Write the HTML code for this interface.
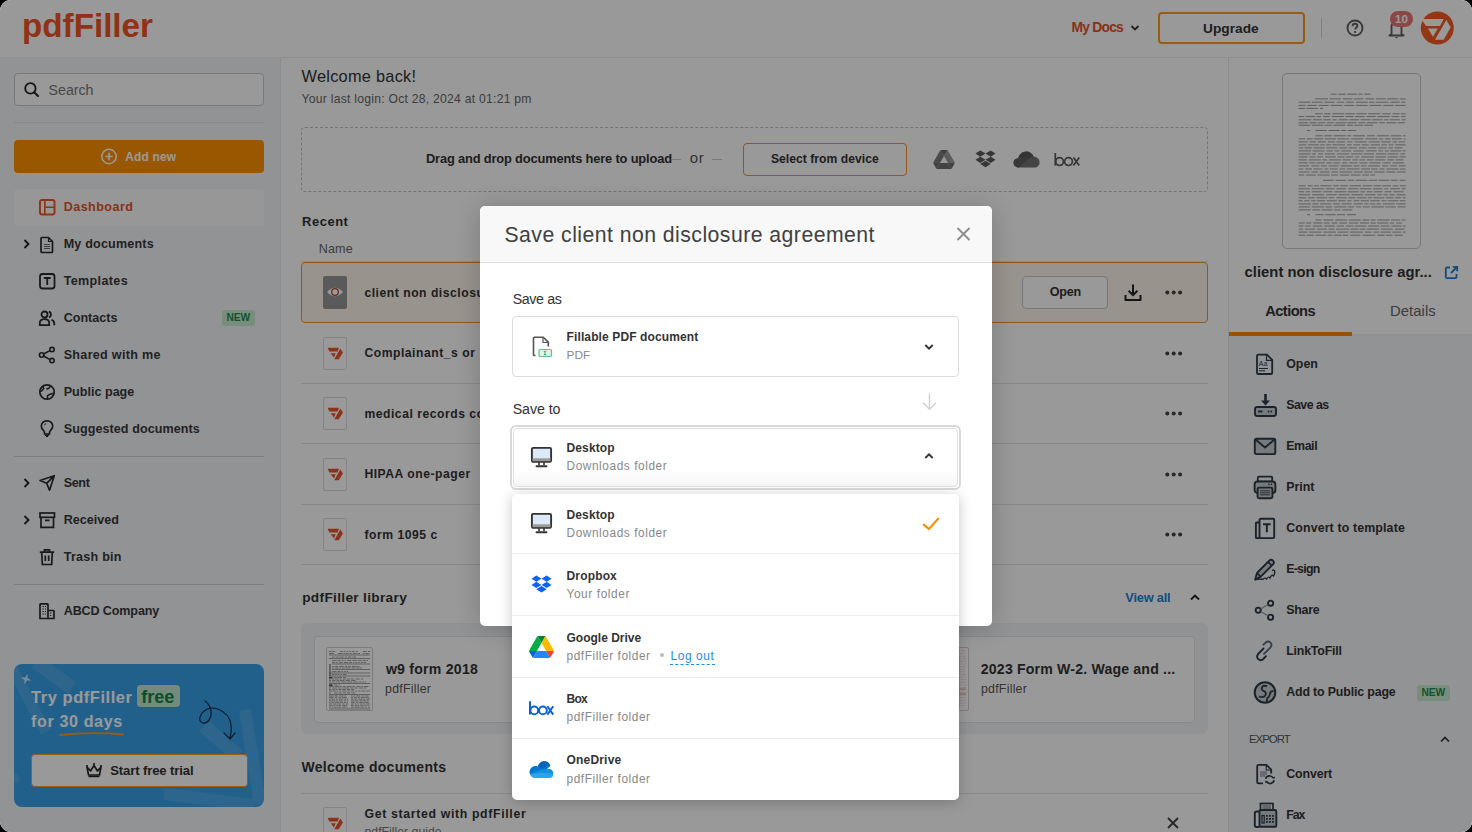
<!DOCTYPE html>
<html><head><meta charset="utf-8">
<style>
*{box-sizing:border-box;margin:0;padding:0}
html,body{width:1472px;height:832px;overflow:hidden;background:#000}
body{font-family:"Liberation Sans",sans-serif;color:#333}
#win{position:absolute;left:0;top:0;width:1472px;height:832px;border-radius:11px;overflow:hidden;background:#fff}
.a{position:absolute}
.t{position:absolute;white-space:nowrap;line-height:1}
#hdr{left:0;top:0;width:1472px;height:58px;background:#fff;border-bottom:1px solid #efefef}
#side{left:0;top:58px;width:281px;height:774px;background:#f3f5f8;border-right:1px solid #eaeaea}
#main{left:281px;top:58px;width:947px;height:774px;background:#fff}
#rp{left:1228px;top:58px;width:244px;height:774px;background:#fff;border-left:1px solid #eaeaea}
#ov{left:0;top:0;width:1472px;height:832px;background:rgba(0,0,0,0.4)}
.nav{position:absolute;left:63px;font-size:12.8px;font-weight:bold;color:#3c3c3c;white-space:nowrap;line-height:1}
.ic{position:absolute}
.b{font-weight:bold}
.act{position:absolute;left:1286px;font-size:12px;color:#333}
.doc{left:323px;width:24px;height:33px;border:1px solid #dcdcdc;border-radius:2px;background:#fff}
.mk{left:327px;width:17px;height:13px}
.dots{left:1164px;width:20px;height:7px}
.card{top:636px;width:285px;height:87px;background:#fff;border:1px solid #e3e3e3;border-radius:4px}
.thumb{top:647px;width:47px;height:64px;border:1px solid #cfcfcf;background:#fff;border-radius:2px;overflow:hidden}
.thumb svg{position:absolute;left:-1px;top:-1px}

</style></head><body>
<svg width="0" height="0" style="position:absolute"><defs><symbol id="mark" viewBox="0 0 17 13"><path d="M0.7 0.7 L12 0.7 L10.6 4.6 L2.3 4.6 Z M3.7 6.2 L8.7 6.2 L7 10.4 Z M13.4 1.5 L15.9 5.4 L11.7 12.3 L7.3 12.3 Z" fill="#e8542a"/></symbol></defs></svg>
<div id="win">
 <div id="main" class="a"></div>
 <!-- HEADER -->
 <div id="hdr" class="a">
  <svg class="a" style="left:20px;top:8px" width="140" height="40" viewBox="0 0 140 40">
   <text x="2" y="29" font-family="Liberation Sans" font-weight="bold" font-size="33" fill="#ef5424" textLength="131" lengthAdjust="spacingAndGlyphs">pdfFiller</text>
  </svg>
  <svg class="a" style="left:1130px;top:24px" width="10" height="8" viewBox="0 0 10 8"><path d="M1.5 2 L5 5.5 L8.5 2" fill="none" stroke="#333" stroke-width="1.8"/></svg>
  <div class="a" style="left:1158px;top:12px;width:147px;height:32px;border:2px solid #ff9a1f;border-radius:4px"></div>
  <div class="a" style="left:1321px;top:18px;width:1px;height:20px;background:#d6d6d6"></div>
  <svg class="a" style="left:1346px;top:19px" width="18" height="18" viewBox="0 0 18 18"><circle cx="9" cy="9" r="7.5" fill="none" stroke="#5f5f5f" stroke-width="1.9"/><path d="M6.6 7.2 C6.6 5.6 7.7 4.8 9 4.8 C10.4 4.8 11.4 5.7 11.4 6.9 C11.4 8.4 9.2 8.6 9.2 10.4" fill="none" stroke="#5f5f5f" stroke-width="1.9"/><circle cx="9.1" cy="13" r="1.1" fill="#5f5f5f"/></svg>
  <svg class="a" style="left:1388px;top:17px" width="17" height="22" viewBox="0 0 17 22"><path d="M3.5 17 L3.5 10 C3.5 6.8 5.6 4.6 8.5 4.6 C11.4 4.6 13.5 6.8 13.5 10 L13.5 17 L15.5 18.5 L1.5 18.5 Z" fill="none" stroke="#5f5f5f" stroke-width="1.9" stroke-linejoin="round"/><path d="M7 20 L10 20 L8.5 21.5Z" fill="#5f5f5f"/></svg>
  <div class="t b keep" style="left:1390px;top:11px;width:23px;height:16px;border-radius:8px;background:#ea7577;color:#fff;font-size:11.5px;line-height:16px;text-align:center">10</div>
  <svg class="a" style="left:1417px;top:8px" width="40" height="40" viewBox="0 0 40 40">
   <circle cx="20.3" cy="20" r="16.5" fill="#f45a24"/>
   <path d="M4.1 11 L26.7 11 L23 18 L9.1 18 Z M11 20.4 L20.9 20.4 L15.9 28.8 Z M29.3 12 L33.7 19.2 L26.7 31.7 L18 31.7 Z" fill="#fff"/>
  </svg>
 </div>
 <!-- SIDEBAR -->
 <div id="side" class="a">
 </div>
 <div class="a" style="left:14px;top:73px;width:250px;height:33px;background:#fff;border:1px solid #c9c9c9;border-radius:4px"></div>
 <svg class="a" style="left:23px;top:81px" width="18" height="18" viewBox="0 0 18 18"><circle cx="7.4" cy="7.4" r="5.2" fill="none" stroke="#222" stroke-width="1.8"/><path d="M11.2 11.2 L15 15" stroke="#222" stroke-width="2" stroke-linecap="round"/></svg>
 <div class="a" style="left:14px;top:122px;width:250px;height:1px;background:#e2e4e7"></div>
 <div class="a" style="left:14px;top:140px;width:250px;height:33px;background:#ff9100;border-radius:4px"></div>
 <svg class="a" style="left:100px;top:147px" width="18" height="18" viewBox="0 0 18 18"><circle cx="9" cy="9.5" r="7.2" fill="none" stroke="#fff" stroke-width="1.5"/><path d="M9 5.8 V13.2 M5.3 9.5 H12.7" stroke="#fff" stroke-width="1.6"/></svg>
 <div class="a" style="left:14px;top:189px;width:250px;height:37px;background:#fcfcfd;border-radius:4px"></div>
 <!-- nav icons -->
 <svg class="a" style="left:38px;top:198px" width="18" height="18" viewBox="0 0 18 18"><rect x="2" y="2" width="14.5" height="14.5" rx="2" fill="none" stroke="#ef5424" stroke-width="1.9"/><path d="M6.8 2 V16.5 M6.8 9.3 H16.5" stroke="#ef5424" stroke-width="1.6"/></svg>
 <svg class="a" style="left:22px;top:238px" width="10" height="12" viewBox="0 0 10 12"><path d="M2.5 2 L6.5 6 L2.5 10" fill="none" stroke="#222" stroke-width="1.8"/></svg>
 <svg class="a" style="left:39px;top:236px" width="16" height="18" viewBox="0 0 16 18"><path d="M3 1.5 H9.5 L13.5 5.5 V15.5 Q13.5 16.5 12.5 16.5 H3 Q2 16.5 2 15.5 V2.5 Q2 1.5 3 1.5 Z" fill="none" stroke="#2a2a2a" stroke-width="1.7"/><path d="M9.5 1.5 V5.5 H13.5" fill="none" stroke="#2a2a2a" stroke-width="1.2"/><path d="M5 8.5 H11 M5 10.5 H11 M5 12.5 H11" stroke="#666" stroke-width="1.2"/></svg>
 <svg class="a" style="left:38px;top:272px" width="18" height="18" viewBox="0 0 18 18"><rect x="2" y="2" width="14.5" height="14.5" rx="2.5" fill="none" stroke="#2a2a2a" stroke-width="1.8"/><path d="M5.8 6 H12.7 M9.25 6 V13" stroke="#2a2a2a" stroke-width="1.8"/></svg>
 <svg class="a" style="left:38px;top:309px" width="18" height="18" viewBox="0 0 18 18"><circle cx="6.5" cy="5.5" r="3" fill="none" stroke="#2a2a2a" stroke-width="1.8"/><path d="M1.8 16.2 V14 Q1.8 10.2 6.5 10.2 Q11.2 10.2 11.2 14 V16.2 Z" fill="none" stroke="#2a2a2a" stroke-width="1.8" stroke-linejoin="round"/><path d="M10.8 2.6 Q13 3.3 13 5.5 Q13 7.5 11 8.4 M13.5 10.8 Q16.3 11.8 16.3 14.5 V16.2" fill="none" stroke="#2a2a2a" stroke-width="1.8"/></svg>
 <div class="a" style="left:222px;top:310px;width:33px;height:16px;background:#c9ecd3;border-radius:3px"></div>
 <svg class="a" style="left:38px;top:346px" width="18" height="18" viewBox="0 0 18 18"><circle cx="3.6" cy="9" r="2.2" fill="none" stroke="#2a2a2a" stroke-width="1.6"/><circle cx="14" cy="3.6" r="2.2" fill="none" stroke="#2a2a2a" stroke-width="1.6"/><circle cx="14" cy="14.6" r="2.2" fill="none" stroke="#2a2a2a" stroke-width="1.6"/><path d="M5.6 8 L12 4.6 M5.6 10 L12 13.6" stroke="#2a2a2a" stroke-width="1.6"/></svg>
 <svg class="a" style="left:38px;top:383px" width="18" height="18" viewBox="0 0 18 18"><circle cx="9" cy="9" r="7.2" fill="none" stroke="#2a2a2a" stroke-width="1.7"/><path d="M4.5 3.3 L5.7 5.5 L3.6 8 L1.9 8.3 M9.5 16.2 L9.5 12.8 L12.2 11.2 L16.1 10.3 M12.6 2.3 L11.2 5 L8.4 6.2" fill="none" stroke="#2a2a2a" stroke-width="1.5"/></svg>
 <svg class="a" style="left:38px;top:419px" width="18" height="20" viewBox="0 0 18 20"><path d="M9 1.8 C5.4 1.8 3.3 4.3 3.3 7.2 C3.3 9.6 5 11 6.3 12.5 L6.6 15 H11.4 L11.7 12.5 C13 11 14.7 9.6 14.7 7.2 C14.7 4.3 12.6 1.8 9 1.8 Z" fill="none" stroke="#2a2a2a" stroke-width="1.7"/><path d="M7 16 L9 18 L11 16Z" fill="#2a2a2a" stroke="#2a2a2a" stroke-width="1"/><path d="M6.5 6.3 Q7 4.8 8.2 4.3" fill="none" stroke="#2a2a2a" stroke-width="1"/></svg>
 <div class="a" style="left:14px;top:456px;width:250px;height:1px;background:#cfd1d4"></div>
 <svg class="a" style="left:22px;top:477px" width="10" height="12" viewBox="0 0 10 12"><path d="M2.5 2 L6.5 6 L2.5 10" fill="none" stroke="#222" stroke-width="1.8"/></svg>
 <svg class="a" style="left:38px;top:474px" width="18" height="18" viewBox="0 0 18 18"><path d="M2 6.5 L16.3 1.7 L11.5 16.2 L8.7 9.3 Z M8.7 9.3 L16.3 1.7" fill="none" stroke="#2a2a2a" stroke-width="1.7" stroke-linejoin="round"/></svg>
 <svg class="a" style="left:22px;top:514px" width="10" height="12" viewBox="0 0 10 12"><path d="M2.5 2 L6.5 6 L2.5 10" fill="none" stroke="#222" stroke-width="1.8"/></svg>
 <svg class="a" style="left:38px;top:511px" width="18" height="18" viewBox="0 0 18 18"><rect x="2" y="2" width="14.5" height="4.3" fill="none" stroke="#2a2a2a" stroke-width="1.7"/><path d="M3 6.3 V16.3 H15.5 V6.3 M7 9.3 H11.5" fill="none" stroke="#2a2a2a" stroke-width="1.7"/></svg>
 <svg class="a" style="left:38px;top:548px" width="18" height="18" viewBox="0 0 18 18"><path d="M1.8 4.2 H16.2 M6.5 4 V1.8 H11.5 V4 M3.7 4.2 L4.3 16.5 H13.7 L14.3 4.2 M7.3 7.5 V13 M10.7 7.5 V13" fill="none" stroke="#2a2a2a" stroke-width="1.7"/></svg>
 <div class="a" style="left:14px;top:584px;width:250px;height:1px;background:#cfd1d4"></div>
 <svg class="a" style="left:38px;top:602px" width="18" height="18" viewBox="0 0 18 18"><path d="M2 16.5 V2.5 Q2 1.8 2.7 1.8 H9.3 Q10 1.8 10 2.5 V16.5 Z M10 8.5 H15.3 Q16 8.5 16 9.2 V16.5 H2" fill="none" stroke="#2a2a2a" stroke-width="1.7"/><path d="M4.5 4.5h1.3M7 4.5h1M4.5 7h1.3M7 7h1M4.5 9.5h1.3M7 9.5h1M4.5 12h1.3M7 12h1M12 11h1.3M12 13.5h1.3" stroke="#2a2a2a" stroke-width="1.2"/></svg>
 <!-- promo -->
 <div class="a" style="left:14px;top:664px;width:250px;height:143px;background:#3aa0ea;border-radius:8px;overflow:hidden">
  <svg width="250" height="143" viewBox="0 0 250 143"><g stroke="rgba(255,255,255,0.09)" stroke-width="11" fill="none"><path d="M-2 4 L32 68"/><path d="M22 -2 L58 24" stroke-width="14"/><path d="M190 62 L224 92" stroke-width="14"/><path d="M231 46 L246 140" stroke-width="12"/><path d="M150 130 L240 141" stroke-width="12"/><path d="M0 110 L4 118" stroke-width="6"/></g></svg>
 </div>
 <svg class="a" style="left:20px;top:673px" width="12" height="12" viewBox="0 0 12 12"><path d="M6 0.5 L7.3 4.7 L11.5 6 L7.3 7.3 L6 11.5 L4.7 7.3 L0.5 6 L4.7 4.7Z" fill="#cfe6f8" transform="rotate(15 6 6)"/></svg>
 <div class="a" style="left:137px;top:685px;width:43px;height:22px;background:#c2e7d0;border-radius:4px"></div>
 <svg class="a" style="left:58px;top:730px" width="68" height="8" viewBox="0 0 68 8"><path d="M2 5 Q34 1.5 65 4.5" fill="none" stroke="#ff9a1f" stroke-width="1.8" stroke-linecap="round"/></svg>
 <svg class="a" style="left:196px;top:698px" width="44" height="46" viewBox="0 0 44 46"><path d="M9 3 Q16 8 15 17 Q13 26 7 25 Q1 23 6 15 Q12 8 22 11 Q34 16 35 27 Q36 33 34 40 M28 35 L34 41 L39 35" fill="none" stroke="#16324f" stroke-width="1.3" stroke-linecap="round"/></svg>
 <div class="a" style="left:31px;top:754px;width:217px;height:33px;background:#fff;border:1px solid #ff9a1f;border-radius:4px"></div>
 <svg class="a" style="left:85px;top:762px" width="18" height="16" viewBox="0 0 18 16"><path d="M2 5 L5.5 9 L9 3.5 L12.5 9 L16 5 L14.5 13 H3.5 Z" fill="none" stroke="#222" stroke-width="1.6" stroke-linejoin="round"/><circle cx="2" cy="4" r="1.1" fill="#222"/><circle cx="9" cy="2" r="1.1" fill="#222"/><circle cx="16" cy="4" r="1.1" fill="#222"/><path d="M3.5 14.5 H14.5" stroke="#222" stroke-width="1.4"/></svg>

 <!-- MAIN -->
 <div class="a" style="left:301px;top:127px;width:907px;height:65px;border:1px dashed #c4c4c4;border-radius:4px"></div>
 <div class="a" style="left:672px;top:159px;width:9px;height:1px;background:#ccc"></div>
 <div class="a" style="left:712px;top:159px;width:10px;height:1px;background:#ccc"></div>
 <div class="a" style="left:743px;top:143px;width:164px;height:33px;border:1px solid #f7931e;border-radius:4px"></div>
 <svg class="a" style="left:933px;top:150px" width="22" height="19" viewBox="0 0 87.3 78"><path d="M6.6 66.85l3.85 6.65c.8 1.4 1.95 2.5 3.3 3.3l13.75-23.8h-27.5c0 1.55.4 3.1 1.2 4.5z" fill="#6e6e6e"/><path d="M43.65 25L29.9 1.2c-1.35.8-2.5 1.9-3.3 3.3l-25.4 44A9.06 9.06 0 0 0 0 53h27.5z" fill="#7c7c7c"/><path d="M73.55 76.8c1.35-.8 2.5-1.9 3.3-3.3l1.6-2.75 7.65-13.25c.8-1.4 1.2-2.95 1.2-4.5H59.798l5.852 11.5z" fill="#6e6e6e"/><path d="M43.65 25L57.4 1.2c-1.35-.8-2.9-1.2-4.5-1.2H34.4c-1.6 0-3.15.45-4.5 1.2z" fill="#686868"/><path d="M59.8 53H27.5L13.75 76.8c1.35.8 2.9 1.2 4.5 1.2h50.8c1.6 0 3.15-.45 4.5-1.2z" fill="#707070"/><path d="M73.4 26.5l-12.7-22c-.8-1.4-1.95-2.5-3.3-3.3L43.65 25 59.8 53h27.45c0-1.55-.4-3.1-1.2-4.5z" fill="#9a9a9a"/></svg>
 <svg class="a" style="left:975px;top:150px" width="21" height="19" viewBox="0 0 21 19"><path d="M5.3 0.5 L0.5 3.6 L5.3 6.7 L10.5 3.6 Z M15.7 0.5 L10.5 3.6 L15.7 6.7 L20.5 3.6 Z M0.5 9.8 L5.3 12.9 L10.5 9.8 L5.3 6.7 Z M20.5 9.8 L15.7 6.7 L10.5 9.8 L15.7 12.9 Z M5.3 14 L10.5 17.3 L15.7 14 L10.5 10.8 Z" fill="#5a5a5a"/></svg>
 <svg class="a" style="left:1013px;top:151px" width="27" height="17" viewBox="0 0 27 17"><path d="M6.2 16.6 C2.6 16.6 0.5 14.4 0.5 11.8 C0.5 9 2.7 7.2 5.3 7.2 C6.2 3.4 9.4 0.6 13.4 0.6 C16.7 0.6 19.4 2.6 20.6 5.6 C24.2 5.9 26.6 8.6 26.6 11.6 C26.6 14.5 24.4 16.6 21.4 16.6 Z" fill="#727272"/><path d="M5.3 7.2 C6.2 3.4 9.4 0.6 13.4 0.6 C16.7 0.6 19.4 2.6 20.6 5.6 C18.6 5.6 17 6.3 15.8 7.4 C13.9 6.4 11.3 6.2 9.2 7.8 C8 7.1 6.6 7 5.3 7.2Z" fill="#585858"/><path d="M0.5 11.8 C0.5 9 2.7 7.2 5.3 7.2 C6.6 7 8 7.1 9.2 7.8 C11.3 6.2 13.9 6.4 15.8 7.4 L6 16.6 C2.6 16.6 0.5 14.4 0.5 11.8Z" fill="#5e5e5e"/></svg>
 <svg class="a" style="left:1053px;top:152px" width="28" height="15" viewBox="0 0 28 15"><g fill="none" stroke="#5a5a5a" stroke-width="1.7"><path d="M2.3 1 V13.6"/><circle cx="6.6" cy="9.6" r="3.9"/><circle cx="15.5" cy="9.6" r="3.9"/><path d="M20.4 5.4 L26.2 13.6 M26.2 5.4 L20.4 13.6"/></g></svg>
 <div class="a" style="left:301px;top:261px;width:907px;height:1px;background:#e6e6e6"></div>
 <!-- row1 highlighted -->
 <div class="a" style="left:301px;top:262px;width:907px;height:61px;border:1px solid #f7931e;border-radius:4px;background:#fff6ec"></div>
 <div class="a" style="left:323px;top:276px;width:24px;height:33px;border-radius:2px;background:#979797"></div>
 <svg class="a" style="left:326px;top:285px" width="18" height="14" viewBox="0 0 18 14"><path d="M1 7 Q9 -1.5 17 7 Q9 15.5 1 7 Z" fill="#fff"/><circle cx="9" cy="7" r="3.3" fill="none" stroke="#b0482a" stroke-width="1.3"/></svg>
 <div class="a" style="left:1022px;top:276px;width:86px;height:33px;border:1px solid #c7c7c7;border-radius:4px;background:#fff"></div>
 <svg class="a" style="left:1123px;top:283px" width="20" height="20" viewBox="0 0 20 20"><path d="M10 1.5 V12 M5.6 7.8 L10 12.2 L14.4 7.8" fill="none" stroke="#222" stroke-width="2"/><path d="M2.5 12 V17 H17.5 V12" fill="none" stroke="#222" stroke-width="2" stroke-linejoin="round"/></svg>
 <svg class="a" style="left:1164px;top:289px" width="20" height="7" viewBox="0 0 20 7"><circle cx="3.3" cy="3.5" r="2" fill="#444"/><circle cx="9.7" cy="3.5" r="2" fill="#444"/><circle cx="16.1" cy="3.5" r="2" fill="#444"/></svg>
 <!-- rows -->
 <div class="a" style="left:301px;top:383px;width:907px;height:1px;background:#e3e3e3"></div>
 <div class="a" style="left:301px;top:443px;width:907px;height:1px;background:#e3e3e3"></div>
 <div class="a" style="left:301px;top:504px;width:907px;height:1px;background:#e3e3e3"></div>
 <div class="a" style="left:301px;top:564px;width:907px;height:1px;background:#e3e3e3"></div>
 <div class="a doc" style="top:337px"></div>
 <div class="a doc" style="top:397px"></div>
 <div class="a doc" style="top:458px"></div>
 <div class="a doc" style="top:518px"></div>
 <svg class="a mk" style="top:347px"><use href="#mark"/></svg>
 <svg class="a mk" style="top:407px"><use href="#mark"/></svg>
 <svg class="a mk" style="top:468px"><use href="#mark"/></svg>
 <svg class="a mk" style="top:528px"><use href="#mark"/></svg>
 <svg class="a dots" style="top:350px"><circle cx="3.3" cy="3.5" r="2" fill="#444"/><circle cx="9.7" cy="3.5" r="2" fill="#444"/><circle cx="16.1" cy="3.5" r="2" fill="#444"/></svg>
 <svg class="a dots" style="top:410px"><circle cx="3.3" cy="3.5" r="2" fill="#444"/><circle cx="9.7" cy="3.5" r="2" fill="#444"/><circle cx="16.1" cy="3.5" r="2" fill="#444"/></svg>
 <svg class="a dots" style="top:471px"><circle cx="3.3" cy="3.5" r="2" fill="#444"/><circle cx="9.7" cy="3.5" r="2" fill="#444"/><circle cx="16.1" cy="3.5" r="2" fill="#444"/></svg>
 <svg class="a dots" style="top:531px"><circle cx="3.3" cy="3.5" r="2" fill="#444"/><circle cx="9.7" cy="3.5" r="2" fill="#444"/><circle cx="16.1" cy="3.5" r="2" fill="#444"/></svg>
 <!-- library -->
 <svg class="a" style="left:1189px;top:593px" width="12" height="9" viewBox="0 0 12 9"><path d="M2 6.5 L6 2.5 L10 6.5" fill="none" stroke="#222" stroke-width="1.8"/></svg>
 <div class="a" style="left:301px;top:623px;width:907px;height:111px;background:#f2f4f7;border-radius:6px"></div>
 <div class="a card" style="left:314px"></div>
 <div class="a card" style="left:612px"></div>
 <div class="a card" style="left:910px"></div>
 <div class="a thumb" style="left:326px"><svg width="47" height="64" viewBox="0 0 47 64"><path fill="none" stroke="#7a7a7a" stroke-width="0.7" d="M3.0 4.5h2.6M6.3 4.5h2.7M14.0 4.5h3.4M18.2 4.5h1.7M20.8 4.5h1.6M23.3 4.5h1.7M25.7 4.5h3.0M29.8 4.5h1.9M37.0 4.5h3.7M41.9 4.5h2.1M3.0 6.5h4.9M12.0 6.5h4.5M17.3 6.5h2.0M20.0 6.5h2.6M23.6 6.5h2.1M26.7 6.5h3.7M31.3 6.5h2.7M37.0 6.5h1.7M39.4 6.5h3.9M3.0 8.0H44.0M6.0 10.0h2.6M9.6 10.0h3.1M13.4 10.0h4.3M18.7 10.0h2.4M22.0 10.0h3.3M26.5 10.0h3.5M3.0 11.5H44.0M6.0 13.5h4.9M11.6 13.5h3.0M15.6 13.5h2.0M18.5 13.5h1.6M21.2 13.5h4.2M26.3 13.5h4.6M31.7 13.5h3.9M36.5 13.5h3.5M40.9 13.5h1.1M6.0 15.5h3.2M10.2 15.5h1.7M12.9 15.5h3.8M17.9 15.5h4.4M23.0 15.5h2.9M26.9 15.5h1.6M29.3 15.5h2.1M32.1 15.5h1.7M34.8 15.5h2.0M37.5 15.5h2.5M6.0 17.0H44.0M6.0 19.5h1.8M8.7 19.5h3.4M13.2 19.5h4.4M18.7 19.5h2.5M22.0 19.5h2.8M25.9 19.5h4.9M31.4 19.5h2.1M6.0 21.0h2.3M9.2 21.0h3.6M13.5 21.0h1.5M15.9 21.0h2.8M19.6 21.0h4.8M25.5 21.0h3.3M29.8 21.0h3.9M34.2 21.0h1.8M6.0 22.5H44.0M6.0 24.5h4.6M11.6 24.5h2.9M15.4 24.5h1.9M18.2 24.5h1.7M20.6 24.5h1.4M3.0 26.0H44.0M6.0 27.5h2.7M9.3 27.5h1.5M11.5 27.5h1.9M14.2 27.5h1.6M16.9 27.5h3.6M3.0 29.0H44.0M3.0 30.5h2.0M8.0 30.5h2.8M11.4 30.5h4.5M17.1 30.5h2.9M3.0 32.0h1.8M5.5 32.0h2.7M8.9 32.0h4.4M14.0 32.0h1.6M16.8 32.0h3.3M20.8 32.0h3.4M24.8 32.0h3.3M29.4 32.0h4.5M34.9 32.0h2.4M3.0 33.5h2.1M6.1 33.5h3.4M10.6 33.5h2.7M14.0 33.5h4.3M19.5 33.5h4.5M25.1 33.5h4.4M3.0 35.0h2.3M6.2 35.0h2.7M9.6 35.0h1.6M11.9 35.0h2.4M15.4 35.0h4.8M21.1 35.0h4.8M27.0 35.0h4.8M32.7 35.0h2.3M35.7 35.0h2.2M38.6 35.0h1.4M3.0 36.5H44.0M3.0 38.0h2.0M8.0 38.0h3.8M12.9 38.0h1.1M3.0 39.5h4.7M8.8 39.5h4.1M13.8 39.5h2.1M17.0 39.5h2.7M20.7 39.5h4.9M26.4 39.5h2.9M30.5 39.5h4.0M35.3 39.5h1.9M37.9 39.5h4.7M3.0 41.0h2.0M6.1 41.0h4.9M12.0 41.0h2.7M15.7 41.0h2.0M18.3 41.0h4.9M24.1 41.0h3.3M28.6 41.0h3.0M32.8 41.0h4.4M37.9 41.0h2.4M3.0 42.5h2.3M6.3 42.5h2.4M9.6 42.5h2.0M12.7 42.5h2.7M16.3 42.5h3.5M21.0 42.5h3.0M25.1 42.5h3.3M3.0 44.0h3.3M6.9 44.0h3.0M10.7 44.0h1.5M13.3 44.0h2.1M16.3 44.0h4.0M21.2 44.0h2.6M24.8 44.0h3.4M29.3 44.0h1.9M32.1 44.0h2.4M35.3 44.0h4.2M40.4 44.0h3.5M3.0 46.0h2.0M8.0 46.0h3.6M12.5 46.0h3.3M16.9 46.0h3.1M20.9 46.0h3.2M25.2 46.0h3.9M3.0 47.5H44.0M3.0 49.0h4.8M8.6 49.0h3.5M13.2 49.0h4.4M18.3 49.0h1.9M25.0 49.0h1.8M27.5 49.0h1.8M30.3 49.0h4.2M35.6 49.0h2.0M38.7 49.0h3.8M3.0 50.6h4.6M8.8 50.6h2.3M12.2 50.6h2.9M16.0 50.6h5.0M25.0 50.6h2.1M27.9 50.6h3.3M32.0 50.6h2.2M35.0 50.6h4.0M39.6 50.6h3.4M3.0 52.2h1.6M5.4 52.2h3.7M10.0 52.2h1.7M12.9 52.2h4.3M18.3 52.2h1.9M20.9 52.2h1.1M25.0 52.2h2.4M28.1 52.2h3.0M32.2 52.2h4.4M37.4 52.2h2.0M40.5 52.2h3.5M3.0 53.8h1.8M5.4 53.8h3.9M10.2 53.8h1.8M13.1 53.8h3.7M17.9 53.8h1.8M20.8 53.8h1.2M25.0 53.8h3.1M28.9 53.8h3.4M33.5 53.8h2.4M36.6 53.8h3.3M40.7 53.8h1.9M3.0 55.4h1.7M5.4 55.4h2.6M8.8 55.4h4.2M13.7 55.4h3.3M17.7 55.4h2.7M21.0 55.4h1.0M25.0 55.4h4.1M30.0 55.4h2.2M33.0 55.4h4.8M38.5 55.4h4.4M3.0 57.0h3.2M7.3 57.0h2.9M11.1 57.0h3.9M16.2 57.0h2.7M20.0 57.0h2.0M25.0 57.0h2.9M28.7 57.0h1.7M31.1 57.0h1.7M33.9 57.0h2.4M37.0 57.0h1.8M39.9 57.0h4.1M3.0 58.6h2.5M6.2 58.6h2.5M9.6 58.6h2.1M12.6 58.6h2.4M16.2 58.6h4.9M25.0 58.6h2.4M28.5 58.6h2.6M31.9 58.6h1.5M34.3 58.6h3.2M38.3 58.6h2.2M41.4 58.6h1.5M3.0 60.2h1.8M5.7 60.2h1.6M7.9 60.2h2.6M11.2 60.2h3.5M15.7 60.2h4.1M20.8 60.2h1.2M25.0 60.2h2.9M28.7 60.2h4.9M34.3 60.2h4.0M39.3 60.2h1.7M42.1 60.2h1.9M3.0 62.0H44.0"/><path d="M4 17V29" stroke="#666" stroke-width="1.2"/><rect x="3" y="29.8" width="3.5" height="1.6" fill="#555"/><rect x="3" y="37.4" width="3.5" height="1.6" fill="#555"/></svg></div>
 <div class="a thumb" style="left:624px"></div>
 <div class="a thumb" style="left:922px"><svg width="47" height="64" viewBox="0 0 47 64"><path fill="none" stroke="#f2b8b8" stroke-width="0.6" d="M3.0 4.0h4.1M8.2 4.0h2.0M11.1 4.0h3.3M15.4 4.0h4.3M20.8 4.0h3.5M25.5 4.0h3.9M30.4 4.0h2.3M33.3 4.0h2.0M36.1 4.0h1.9M39.1 4.0h3.5M3.0 6.6h3.7M7.7 6.6h3.2M11.5 6.6h4.3M16.9 6.6h3.3M21.0 6.6h3.8M25.5 6.6h4.1M30.3 6.6h1.8M32.8 6.6h4.1M37.6 6.6h4.1M42.9 6.6h1.1M3.0 9.2h3.2M7.2 9.2h4.2M12.3 9.2h3.7M16.7 9.2h2.0M19.5 9.2h4.1M24.4 9.2h3.5M28.5 9.2h1.7M31.0 9.2h3.9M35.8 9.2h3.9M40.5 9.2h3.3M3.0 11.8h3.1M6.8 11.8h4.6M12.2 11.8h4.9M18.2 11.8h1.6M20.7 11.8h4.4M26.2 11.8h3.1M30.1 11.8h2.2M33.5 11.8h2.2M36.6 11.8h2.0M39.6 11.8h4.4M3.0 14.4h4.4M8.3 14.4h4.6M13.9 14.4h2.3M17.4 14.4h3.2M21.2 14.4h1.5M23.6 14.4h3.1M27.4 14.4h2.0M30.2 14.4h2.6M33.9 14.4h1.5M36.5 14.4h4.4M41.6 14.4h2.4M3.0 17.0h4.7M8.4 17.0h2.8M12.1 17.0h5.0M18.0 17.0h2.8M21.6 17.0h2.5M24.7 17.0h1.9M27.7 17.0h2.5M31.3 17.0h2.4M34.5 17.0h3.3M38.5 17.0h2.8M42.5 17.0h1.5M3.0 19.6h3.7M7.9 19.6h4.8M13.6 19.6h4.0M18.2 19.6h4.1M23.2 19.6h4.1M28.3 19.6h2.5M31.4 19.6h4.7M36.8 19.6h3.2M40.8 19.6h2.5M3.0 22.2h4.9M8.7 22.2h3.8M13.2 22.2h3.5M17.5 22.2h2.1M20.3 22.2h2.2M23.7 22.2h3.2M27.7 22.2h4.7M33.5 22.2h3.1M37.3 22.2h2.2M40.1 22.2h2.7M3.0 24.8h2.3M6.1 24.8h3.5M10.7 24.8h4.1M15.7 24.8h2.9M19.6 24.8h2.8M23.2 24.8h1.7M25.7 24.8h4.9M31.2 24.8h3.3M35.5 24.8h4.5M40.7 24.8h2.4M3.0 27.4h2.9M6.8 27.4h4.8M12.7 27.4h4.6M17.9 27.4h1.6M20.5 27.4h4.6M26.0 27.4h3.6M30.2 27.4h2.9M34.2 27.4h4.4M39.7 27.4h4.3M3.0 30.0h1.9M5.6 30.0h3.3M9.9 30.0h4.8M15.7 30.0h3.8M20.6 30.0h3.1M24.6 30.0h1.6M27.3 30.0h2.3M30.8 30.0h3.8M35.3 30.0h1.9M38.0 30.0h3.7M42.8 30.0h1.2M3.0 32.6h3.3M7.3 32.6h2.9M10.9 32.6h3.6M15.1 32.6h2.6M18.5 32.6h4.9M24.4 32.6h4.6M29.8 32.6h2.3M32.9 32.6h4.9M38.8 32.6h2.6M42.0 32.6h2.0M3.0 35.2h3.0M6.7 35.2h3.8M11.7 35.2h2.3M14.6 35.2h2.7M18.2 35.2h3.9M22.8 35.2h4.3M28.1 35.2h3.3M32.1 35.2h4.9M37.8 35.2h4.4M42.9 35.2h1.1M3.0 37.8h2.5M6.7 37.8h3.2M10.7 37.8h2.3M13.8 37.8h3.8M18.8 37.8h2.0M21.6 37.8h2.2M25.1 37.8h2.0M27.7 37.8h1.7M30.2 37.8h4.6M36.0 37.8h4.1M41.3 37.8h2.7M3.0 40.4h2.1M6.3 40.4h4.1M11.0 40.4h3.8M15.7 40.4h2.8M19.3 40.4h2.1M22.0 40.4h2.5M25.3 40.4h4.8M30.8 40.4h4.9M36.4 40.4h2.7M40.2 40.4h3.8M3.0 43.0h1.7M5.6 43.0h2.8M9.5 43.0h2.2M12.5 43.0h4.6M17.8 43.0h2.9M21.8 43.0h4.2M26.6 43.0h1.6M28.9 43.0h4.7M34.3 43.0h4.1M39.6 43.0h2.7M3.0 45.6h4.9M8.8 45.6h2.4M12.3 45.6h2.6M15.6 45.6h1.5M18.2 45.6h4.7M23.9 45.6h4.8M29.3 45.6h2.3M32.5 45.6h4.8M38.5 45.6h2.9M42.1 45.6h1.9M3.0 48.2h4.7M8.5 48.2h4.3M13.8 48.2h4.4M19.3 48.2h3.6M23.7 48.2h2.6M27.1 48.2h4.2M32.0 48.2h2.2M35.2 48.2h2.4M38.2 48.2h1.6M40.8 48.2h2.6M3.0 50.8h4.6M8.8 50.8h2.4M11.9 50.8h1.8M14.6 50.8h4.0M19.5 50.8h2.3M22.6 50.8h3.7M27.3 50.8h4.1M32.5 50.8h3.8M37.0 50.8h4.4M42.2 50.8h1.8M3.0 53.4h4.1M7.8 53.4h2.4M10.9 53.4h2.0M14.1 53.4h3.5M18.4 53.4h2.9M22.5 53.4h3.3M26.5 53.4h4.3M31.8 53.4h5.0M37.5 53.4h3.2M41.7 53.4h2.3M3.0 56.0h1.6M5.4 56.0h1.9M8.0 56.0h4.9M13.9 56.0h4.8M19.5 56.0h4.5M24.9 56.0h2.4M28.4 56.0h4.8M33.8 56.0h3.6M38.4 56.0h2.3M41.5 56.0h2.0M3.0 58.6h2.4M6.4 58.6h3.8M10.9 58.6h1.5M13.2 58.6h3.9M17.8 58.6h2.6M21.1 58.6h4.3M26.3 58.6h1.7M28.7 58.6h2.9M32.5 58.6h3.7M36.9 58.6h2.1M40.0 58.6h2.9"/><path d="M3 42H44M3 47H44M37 2V62" stroke="#e88" stroke-width="0.8"/></svg></div>
 <div class="a" style="left:301px;top:793px;width:907px;height:1px;background:#e3e3e3"></div>
 <div class="a doc" style="top:807px"></div>
 <svg class="a mk" style="top:817px"><use href="#mark"/></svg>
 <svg class="a" style="left:1166px;top:816px" width="14" height="14" viewBox="0 0 14 14"><path d="M2 2 L12 12 M12 2 L2 12" stroke="#444" stroke-width="1.8"/></svg>

 <div id="rp" class="a"></div>
 <!-- RIGHT PANEL -->
 <div class="a" style="left:1229px;top:336px;width:243px;height:496px;background:#f3f5f8"></div>
 <div class="a" style="left:1282px;top:73px;width:139px;height:176px;border:1px solid #c8c8c8;border-radius:5px;background:#fff;overflow:hidden">
  <svg width="139" height="176" viewBox="0 0 139 176"><path fill="none" stroke="#9c9c9c" stroke-width="1" d="M47.6 20.2h6.1M55.4 20.2h7.3M64.4 20.2h9.6M75.3 20.2h4.1M81.3 20.2h6.3M32.0 24.9h13.0M46.5 24.9h11.5M59.6 24.9h9.8M70.7 24.9h9.7M82.3 24.9h8.7M92.8 24.9h10.0M104.1 24.9h10.8M116.6 24.9h6.0M15.6 28.2h11.8M29.0 28.2h10.5M41.3 28.2h10.4M53.7 28.2h7.6M63.1 28.2h8.0M73.0 28.2h11.9M86.2 28.2h5.2M92.8 28.2h12.7M107.1 28.2h9.6M118.2 28.2h4.4M15.6 31.4h7.2M24.4 31.4h9.3M35.6 31.4h10.1M47.7 31.4h11.7M61.4 31.4h10.0M72.8 31.4h11.7M86.5 31.4h12.1M100.3 31.4h10.4M112.1 31.4h10.5M15.6 34.4h6.6M23.4 34.4h11.7M37.1 34.4h2.9M32.0 39.8h7.7M41.0 39.8h6.6M49.5 39.8h11.9M62.6 39.8h9.5M73.3 39.8h10.5M85.3 39.8h11.9M99.2 39.8h8.5M109.7 39.8h6.8M117.8 39.8h4.8M15.6 42.6h5.8M22.9 42.6h9.5M33.7 42.6h4.4M40.0 42.6h6.8M48.8 42.6h12.1M62.4 42.6h8.1M72.1 42.6h9.8M83.6 42.6h9.0M94.3 42.6h12.5M108.4 42.6h7.9M118.1 42.6h4.5M15.6 45.8h12.8M30.0 45.8h8.9M40.2 45.8h7.7M49.6 45.8h4.2M55.4 45.8h9.7M66.4 45.8h9.6M77.6 45.8h10.1M89.2 45.8h10.4M101.3 45.8h4.2M106.8 45.8h10.1M118.8 45.8h3.8M15.6 48.8h9.3M26.4 48.8h7.3M35.1 48.8h7.3M44.1 48.8h6.7M52.3 48.8h11.0M64.5 48.8h9.1M75.4 48.8h6.8M83.6 48.8h11.2M96.2 48.8h5.7M103.4 48.8h10.3M115.0 48.8h6.9M15.6 51.2h11.5M28.7 51.2h11.7M41.7 51.2h7.0M50.4 51.2h12.0M64.0 51.2h6.0M71.3 51.2h8.8M81.4 51.2h8.6M24.0 56.5h3.0M32.5 56.5h11.3M45.5 56.5h11.3M58.2 56.5h5.2M64.8 56.5h8.2M32.5 61.8h7.1M41.2 61.8h7.8M50.5 61.8h12.3M64.1 61.8h4.0M70.1 61.8h11.9M84.0 61.8h7.9M93.8 61.8h12.3M107.6 61.8h10.7M120.1 61.8h2.5M15.6 64.9h6.6M23.7 64.9h6.0M31.0 64.9h9.3M41.7 64.9h11.3M54.2 64.9h12.1M68.1 64.9h12.3M82.4 64.9h12.1M96.1 64.9h4.1M102.0 64.9h5.5M109.0 64.9h10.0M120.6 64.9h2.0M15.6 67.9h9.5M26.6 67.9h6.3M34.7 67.9h8.3M44.9 67.9h7.2M53.4 67.9h8.8M64.1 67.9h5.5M71.4 67.9h12.3M85.6 67.9h11.4M98.2 67.9h9.7M109.7 67.9h4.4M115.6 67.9h6.4M15.6 70.9h7.8M25.0 70.9h11.0M37.2 70.9h4.5M43.0 70.9h5.1M49.3 70.9h12.8M64.0 70.9h4.8M70.4 70.9h6.8M78.7 70.9h7.2M87.6 70.9h9.3M98.3 70.9h5.7M105.5 70.9h5.1M112.3 70.9h10.3M15.6 73.9h4.7M21.7 73.9h7.4M30.7 73.9h11.0M43.3 73.9h11.2M56.2 73.9h7.9M65.5 73.9h8.5M75.8 73.9h7.8M85.3 73.9h8.1M94.9 73.9h8.8M105.4 73.9h4.6M111.6 73.9h7.8M15.6 76.9h12.4M29.5 76.9h12.1M43.4 76.9h6.4M51.4 76.9h5.1M58.3 76.9h10.0M70.2 76.9h11.1M83.1 76.9h10.6M95.3 76.9h4.9M101.9 76.9h4.0M107.3 76.9h11.0M119.5 76.9h3.1M15.6 79.9h11.9M28.9 79.9h4.2M35.0 79.9h5.1M41.9 79.9h10.1M53.8 79.9h12.6M68.1 79.9h11.2M80.5 79.9h10.9M93.0 79.9h10.4M104.7 79.9h10.7M117.4 79.9h4.6M15.6 82.9h9.1M26.5 82.9h6.2M34.1 82.9h6.2M42.0 82.9h10.8M54.3 82.9h7.3M63.1 82.9h7.2M71.8 82.9h4.7M78.2 82.9h12.8M92.4 82.9h10.7M104.5 82.9h10.2M116.5 82.9h6.1M15.6 85.9h8.4M25.7 85.9h12.1M39.1 85.9h4.9M45.7 85.9h12.2M59.6 85.9h8.0M69.4 85.9h5.7M76.4 85.9h5.8M83.9 85.9h6.8M92.1 85.9h10.2M104.3 85.9h6.7M112.7 85.9h7.7M15.6 88.9h9.3M26.3 88.9h6.0M33.5 88.9h8.3M43.3 88.9h5.6M50.3 88.9h6.9M59.0 88.9h5.3M66.3 88.9h8.3M76.3 88.9h8.2M86.4 88.9h11.4M99.4 88.9h8.3M109.5 88.9h11.7M15.6 91.9h10.6M28.2 91.9h8.2M37.8 91.9h6.1M45.6 91.9h10.1M57.7 91.9h11.7M70.8 91.9h5.7M77.9 91.9h5.7M85.3 91.9h11.7M99.0 91.9h6.3M107.2 91.9h6.8M115.5 91.9h7.1M15.6 95.0h4.8M22.3 95.0h6.6M30.4 95.0h9.2M41.4 95.0h4.1M46.9 95.0h7.9M56.4 95.0h5.9M64.0 95.0h12.6M78.1 95.0h8.9M88.3 95.0h6.5M96.5 95.0h5.0M103.4 95.0h12.2M116.9 95.0h5.7M15.6 98.0h11.0M28.4 98.0h6.7M36.8 98.0h9.9M48.5 98.0h6.4M56.7 98.0h12.7M71.1 98.0h8.8M81.2 98.0h8.4M91.1 98.0h10.5M103.3 98.0h9.1M113.8 98.0h8.8M15.6 101.0h5.6M23.1 101.0h9.9M34.3 101.0h12.4M48.0 101.0h7.0M56.8 101.0h9.4M67.8 101.0h9.8M79.2 101.0h6.8M87.3 101.0h4.6M40.0 106.3h10.8M52.4 106.3h10.7M64.6 106.3h6.4M72.5 106.3h11.9M85.6 106.3h8.5M95.5 106.3h10.9M107.9 106.3h7.0M116.4 106.3h6.2M15.6 111.8h7.2M24.7 111.8h5.0M31.1 111.8h4.9M37.3 111.8h11.0M50.1 111.8h5.7M57.1 111.8h7.7M66.6 111.8h11.3M79.8 111.8h9.3M90.4 111.8h7.6M99.3 111.8h8.7M109.7 111.8h5.8M117.0 111.8h5.6M15.6 114.8h11.2M28.7 114.8h12.5M42.8 114.8h9.0M53.4 114.8h9.7M65.1 114.8h10.2M76.7 114.8h11.7M90.1 114.8h9.4M101.3 114.8h4.0M107.1 114.8h10.0M118.6 114.8h4.0M15.6 117.8h5.7M23.0 117.8h4.3M28.9 117.8h9.8M40.3 117.8h9.1M51.3 117.8h12.0M64.7 117.8h11.1M77.5 117.8h4.5M83.4 117.8h6.1M90.8 117.8h8.8M101.6 117.8h6.9M110.4 117.8h10.3M15.6 120.8h11.7M29.0 120.8h12.3M43.1 120.8h10.7M55.3 120.8h11.3M68.5 120.8h11.8M81.8 120.8h10.8M94.2 120.8h5.0M100.4 120.8h4.7M106.4 120.8h5.4M113.5 120.8h9.1M15.6 123.8h7.8M25.1 123.8h6.7M33.4 123.8h10.8M45.8 123.8h5.6M53.3 123.8h10.5M65.3 123.8h7.3M74.2 123.8h9.4M85.0 123.8h4.0M90.4 123.8h11.0M102.7 123.8h8.1M112.2 123.8h5.9M119.5 123.8h3.1M15.6 126.8h4.2M21.1 126.8h5.5M28.2 126.8h4.5M34.0 126.8h8.0M43.6 126.8h10.3M55.1 126.8h7.6M64.3 126.8h4.2M70.5 126.8h6.0M77.7 126.8h8.3M87.3 126.8h9.6M98.4 126.8h5.1M104.8 126.8h10.5M116.7 126.8h5.9M15.6 129.9h12.4M29.4 129.9h6.2M37.1 129.9h11.3M50.1 129.9h7.1M58.5 129.9h10.1M70.6 129.9h9.3M81.2 129.9h4.3M86.7 129.9h5.5M93.5 129.9h4.5M99.7 129.9h12.1M113.1 129.9h9.5M15.6 132.9h11.2M28.8 132.9h12.5M42.5 132.9h6.7M50.9 132.9h12.5M64.7 132.9h6.6M73.2 132.9h5.0M79.7 132.9h7.0M88.5 132.9h12.4M102.2 132.9h10.7M114.6 132.9h8.0M15.6 135.9h12.3M29.4 135.9h7.7M38.5 135.9h11.0M51.1 135.9h6.4M58.9 135.9h10.5M24.0 140.7h3.0M32.5 140.7h8.4M42.2 140.7h10.4M53.8 140.7h8.2M63.8 140.7h9.2M32.5 146.0h6.1M40.5 146.0h9.8M52.2 146.0h11.9M65.6 146.0h12.1M79.5 146.0h7.0M88.0 146.0h4.6M94.1 146.0h12.6M108.0 146.0h9.1M118.4 146.0h4.2M15.6 149.0h6.2M23.0 149.0h5.4M30.1 149.0h9.3M40.6 149.0h6.1M48.6 149.0h6.0M56.2 149.0h7.8M65.8 149.0h9.4M77.1 149.0h8.8M87.3 149.0h5.6M94.1 149.0h11.4M106.9 149.0h4.2M113.1 149.0h5.8M15.6 152.0h4.8M21.9 152.0h6.0M29.8 152.0h9.5M41.1 152.0h10.9M53.8 152.0h7.1M62.6 152.0h8.0M71.9 152.0h11.5M85.1 152.0h11.3M97.8 152.0h8.9M108.2 152.0h10.6M120.0 152.0h2.6M15.6 155.1h4.6M21.9 155.1h10.6M34.0 155.1h9.8M45.6 155.1h5.9M53.0 155.1h13.0M67.4 155.1h7.9M76.5 155.1h6.0M83.8 155.1h12.4M98.0 155.1h11.9M111.9 155.1h9.5M15.6 158.1h8.8M26.0 158.1h12.5M40.4 158.1h12.5M54.5 158.1h11.0M67.0 158.1h13.0M81.9 158.1h6.6M90.5 158.1h5.7M97.5 158.1h10.5M109.4 158.1h8.7M119.8 158.1h2.8M15.6 161.2h6.5M23.6 161.2h7.1M32.5 161.2h10.7M44.7 161.2h4.9M51.0 161.2h7.7M60.0 161.2h5.4M67.2 161.2h10.3M79.5 161.2h12.8M94.2 161.2h7.4M102.9 161.2h6.8M111.3 161.2h8.7"/></svg>
 </div>
 <svg class="a" style="left:1444px;top:265px" width="15" height="15" viewBox="0 0 15 15"><path d="M6 2.5 H3 Q1.8 2.5 1.8 3.7 V12 Q1.8 13.2 3 13.2 H11.3 Q12.5 13.2 12.5 12 V9" fill="none" stroke="#1f7fd1" stroke-width="1.8"/><path d="M7 8 L13 2 M8.8 1.8 H13.2 V6.2" fill="none" stroke="#1f7fd1" stroke-width="1.8"/></svg>
 <div class="a" style="left:1229px;top:332px;width:123px;height:4px;background:#ff8a00"></div>
 <div class="a" style="left:1352px;top:334px;width:120px;height:2px;background:#eceef1"></div>
 <!-- actions -->
 <svg class="a" style="left:1255px;top:353px" width="20" height="23" viewBox="0 0 20 23"><path d="M3.3 1.7 H12 L17.2 6.9 V19.7 Q17.2 21 16 21 H3.3 Q2 21 2 19.7 V3 Q2 1.7 3.3 1.7Z" fill="none" stroke="#2f3a45" stroke-width="1.8"/><path d="M11.5 1.7 V7.3 H17.2" fill="none" stroke="#2f3a45" stroke-width="1.2"/><text x="3.8" y="13.2" font-family="Liberation Sans" font-size="7" fill="#2f3a45">Aa</text><path d="M4 15.5 H13 M4 17.8 H10" stroke="#2f3a45" stroke-width="1"/></svg>
 <svg class="a" style="left:1253px;top:393px" width="25" height="25" viewBox="0 0 25 25"><path d="M12.5 1 V9" stroke="#2f3a45" stroke-width="2.6"/><path d="M8 7.6 L12.5 12.5 L17 7.6 Z" fill="#2f3a45"/><rect x="2" y="14" width="21" height="9" rx="2.2" fill="#c9ced3" stroke="#2f3a45" stroke-width="1.9"/><path d="M5 18.5 H9.5" stroke="#2f3a45" stroke-width="1.8"/><circle cx="15.5" cy="18.5" r="0.9" fill="#2f3a45"/><circle cx="18.3" cy="18.5" r="0.9" fill="#2f3a45"/></svg>
 <svg class="a" style="left:1253px;top:437px" width="24" height="19" viewBox="0 0 24 19"><rect x="1.8" y="1.8" width="20.5" height="15.3" rx="1.6" fill="#c9ced3" stroke="#2f3a45" stroke-width="1.9"/><path d="M2.5 2.5 L12 10.5 L21.5 2.5" fill="none" stroke="#2f3a45" stroke-width="1.8"/></svg>
 <svg class="a" style="left:1253px;top:475px" width="24" height="25" viewBox="0 0 24 25"><rect x="4.8" y="1.6" width="14.4" height="5" rx="1" fill="none" stroke="#2f3a45" stroke-width="1.8"/><rect x="1.6" y="6.5" width="20.8" height="11.5" rx="3" fill="#c9ced3" stroke="#2f3a45" stroke-width="1.9"/><rect x="4.6" y="12.6" width="14.8" height="10.6" rx="1.5" fill="#c9ced3" stroke="#2f3a45" stroke-width="1.9"/><path d="M7 15.8 H17 M7 17.8 H17 M7 19.8 H17" stroke="#2f3a45" stroke-width="0.9"/><circle cx="16" cy="9.4" r="0.8" fill="#2f3a45"/><circle cx="18.4" cy="9.4" r="0.8" fill="#2f3a45"/></svg>
 <svg class="a" style="left:1254px;top:517px" width="22" height="23" viewBox="0 0 22 23"><rect x="5.5" y="1.8" width="14.7" height="19.3" rx="1" fill="none" stroke="#2f3a45" stroke-width="1.9"/><path d="M5.5 5.5 H2.8 Q1.9 5.5 1.9 6.4 V20.2 Q1.9 21.1 2.8 21.1 H6" fill="none" stroke="#2f3a45" stroke-width="1.9"/><path d="M9 7.3 H16.7 M12.85 7.3 V15.3" stroke="#2f3a45" stroke-width="2"/></svg>
 <svg class="a" style="left:1252px;top:557px" width="26" height="25" viewBox="0 0 26 25"><path d="M3.2 22.5 L5 16 L17.2 3.6 Q19.2 1.8 21 3.6 Q22.8 5.5 21 7.4 L8.8 19.7 Z" fill="#c9ced3" stroke="#2f3a45" stroke-width="1.9" stroke-linejoin="round"/><path d="M5 16 L8.8 19.7 M16 4.9 L19.7 8.6" stroke="#2f3a45" stroke-width="1.7"/><path d="M3 23 Q8 21.5 11 22.3 Q13 20 14.5 22 Q16.5 19 18 21 Q20 16.8 21.5 19 Q23.5 16.5 22.4 13.6 Q21 12 20.3 14" fill="none" stroke="#2f3a45" stroke-width="1.3"/></svg>
 <svg class="a" style="left:1254px;top:599px" width="22" height="23" viewBox="0 0 22 23"><circle cx="4.2" cy="11.2" r="2.6" fill="none" stroke="#2f3a45" stroke-width="1.9"/><circle cx="16.6" cy="4.2" r="2.6" fill="none" stroke="#2f3a45" stroke-width="1.9"/><circle cx="16.6" cy="18.2" r="2.6" fill="none" stroke="#2f3a45" stroke-width="1.9"/><path d="M6.6 10 L14 5.5 M6.6 12.5 L14 16.8" stroke="#8a96a3" stroke-width="1.2"/></svg>
 <svg class="a" style="left:1254px;top:640px" width="22" height="23" viewBox="0 0 22 23"><path d="M9.5 8.5 L4.2 13.8 Q2 16.5 4.2 19 Q6.8 21.3 9.3 19 L12 16.2" fill="none" stroke="#2f3a45" stroke-width="1.9" stroke-linecap="round"/><path d="M10 13.8 L16.5 7.3 Q18.5 4.8 16.5 2.6 Q14 0.4 11.6 2.6 L9.5 4.7" fill="none" stroke="#5a6c80" stroke-width="1.9" stroke-linecap="round"/></svg>
 <svg class="a" style="left:1253px;top:680px" width="24" height="25" viewBox="0 0 24 25"><circle cx="12" cy="12.5" r="10.3" fill="#c9ced3" stroke="#2f3a45" stroke-width="2"/><path d="M14.2 6.2 Q10 4.8 8.8 7.6 Q8 10 11.3 11.4 Q14 12.8 12.2 15.6 Q10.5 18 6 16.5" fill="none" stroke="#2f3a45" stroke-width="1.8"/><path d="M20.5 10.8 Q17 11.2 16.8 14.2 Q16.6 17.2 14.2 18.4 L13.6 21.8" fill="none" stroke="#2f3a45" stroke-width="1.8"/></svg>
 <div class="a" style="left:1417px;top:685px;width:33px;height:16px;background:#c9ecd3;border-radius:3px"></div>
 <svg class="a" style="left:1439px;top:735px" width="12" height="9" viewBox="0 0 12 9"><path d="M2 6.5 L6 2.5 L10 6.5" fill="none" stroke="#333" stroke-width="1.7"/></svg>
 <svg class="a" style="left:1255px;top:763px" width="22" height="23" viewBox="0 0 22 23"><path d="M8 20.3 H3.5 Q2.2 20.3 2.2 19 V3.2 Q2.2 1.9 3.5 1.9 H11.5 L16.2 6.6 V10.5" fill="none" stroke="#2f3a45" stroke-width="1.8"/><path d="M11.2 1.9 V7 H16.2" fill="none" stroke="#2f3a45" stroke-width="1.1"/><path d="M5 9 H12 M5 11 H12 M5 13 H10" stroke="#6c7783" stroke-width="1"/><path d="M10.5 15.8 Q11.8 12.6 15.2 13 Q17.5 13.4 18.3 15.2 M19.2 17.3 Q18 20.8 14.6 20.5 Q12.3 20.2 11.6 18.4" fill="none" stroke="#2f3a45" stroke-width="1.7"/><path d="M17 14.7 L19.5 16 L19.8 13.4Z M12.8 18.8 L10.3 17.5 L10.2 20.1Z" fill="#2f3a45"/></svg>
 <svg class="a" style="left:1253px;top:802px" width="25" height="27" viewBox="0 0 25 27"><rect x="7.5" y="1.5" width="12.5" height="6.5" fill="none" stroke="#2f3a45" stroke-width="1.7"/><path d="M9.5 4 H18 M9.5 6 H18" stroke="#2f3a45" stroke-width="0.8"/><rect x="6.5" y="8" width="16.8" height="16.8" rx="1.4" fill="#c9ced3" stroke="#2f3a45" stroke-width="1.9"/><path d="M6.5 9.5 H3.5 Q1.8 9.5 1.8 11.2 V23.5 Q1.8 25 3.5 25 H6.5" fill="none" stroke="#2f3a45" stroke-width="1.9"/><rect x="9" y="13.5" width="2.2" height="7.5" fill="none" stroke="#2f3a45" stroke-width="1.2"/><g fill="#2f3a45"><rect x="13" y="13" width="1.8" height="1.8"/><rect x="16" y="13" width="1.8" height="1.8"/><rect x="19" y="13" width="1.8" height="1.8"/><rect x="13" y="16" width="1.8" height="1.8"/><rect x="16" y="16" width="1.8" height="1.8"/><rect x="19" y="16" width="1.8" height="1.8"/><rect x="13" y="19" width="1.8" height="1.8"/><rect x="16" y="19" width="1.8" height="1.8"/><rect x="19" y="19" width="1.8" height="1.8"/></g></svg>

 <div class="t" style="left:1071.50px;top:21.10px;font-size:13.83px;letter-spacing:-0.77px;font-weight:bold;color:#e5532a;">My Docs</div>
 <div class="t" style="left:1203.00px;top:21.71px;font-size:13.69px;letter-spacing:0.02px;font-weight:bold;color:#333;">Upgrade</div>
 <div class="t" style="left:48.60px;top:82.84px;font-size:14.25px;letter-spacing:-0.04px;color:#777;">Search</div>
 <div class="t" style="left:125.30px;top:150.53px;font-size:12.01px;letter-spacing:0.12px;font-weight:bold;color:#fff;">Add new</div>
 <div class="t" style="left:63.70px;top:201.43px;font-size:12.57px;letter-spacing:0.45px;font-weight:bold;color:#e5532a;">Dashboard</div>
 <div class="t" style="left:63.70px;top:238.43px;font-size:12.57px;letter-spacing:0.19px;font-weight:bold;color:#383838;">My documents</div>
 <div class="t" style="left:63.70px;top:275.43px;font-size:12.57px;letter-spacing:0.34px;font-weight:bold;color:#383838;">Templates</div>
 <div class="t" style="left:63.70px;top:312.43px;font-size:12.57px;letter-spacing:-0.01px;font-weight:bold;color:#383838;">Contacts</div>
 <div class="t" style="left:63.70px;top:349.43px;font-size:12.57px;letter-spacing:0.30px;font-weight:bold;color:#383838;">Shared with me</div>
 <div class="t" style="left:63.70px;top:386.43px;font-size:12.57px;letter-spacing:0.01px;font-weight:bold;color:#383838;">Public page</div>
 <div class="t" style="left:63.70px;top:423.43px;font-size:12.57px;letter-spacing:0.08px;font-weight:bold;color:#383838;">Suggested documents</div>
 <div class="t" style="left:63.70px;top:477.43px;font-size:12.57px;letter-spacing:-0.34px;font-weight:bold;color:#383838;">Sent</div>
 <div class="t" style="left:63.70px;top:514.43px;font-size:12.57px;letter-spacing:0.02px;font-weight:bold;color:#383838;">Received</div>
 <div class="t" style="left:63.70px;top:551.43px;font-size:12.57px;letter-spacing:0.24px;font-weight:bold;color:#383838;">Trash bin</div>
 <div class="t" style="left:63.70px;top:605.43px;font-size:12.57px;letter-spacing:-0.13px;font-weight:bold;color:#383838;">ABCD Company</div>
 <div class="t" style="left:226.40px;top:313.07px;font-size:10.20px;letter-spacing:-0.03px;font-weight:bold;color:#1f8a4c;">NEW</div>
 <div class="t" style="left:31.00px;top:688.85px;font-size:16.48px;letter-spacing:0.56px;font-weight:bold;color:#fff;">Try pdfFiller</div>
 <div class="t" style="left:141.20px;top:687.55px;font-size:18.02px;letter-spacing:0.00px;font-weight:bold;color:#0f8446;">free</div>
 <div class="t" style="left:31.00px;top:713.40px;font-size:16.06px;letter-spacing:0.64px;font-weight:bold;color:#fff;">for 30 days</div>
 <div class="t" style="left:110.20px;top:763.99px;font-size:13.13px;letter-spacing:-0.13px;font-weight:bold;color:#333;">Start free trial</div>
 <div class="t" style="left:301.50px;top:67.57px;font-size:16.34px;letter-spacing:0.27px;color:#333;">Welcome back!</div>
 <div class="t" style="left:301.50px;top:92.51px;font-size:12.15px;letter-spacing:0.26px;color:#666;">Your last login: Oct 28, 2024 at 01:21 pm</div>
 <div class="t" style="left:426.00px;top:153.32px;font-size:12.85px;letter-spacing:-0.16px;font-weight:bold;color:#333;">Drag and drop documents here to upload</div>
 <div class="t" style="left:689.80px;top:150.85px;font-size:14.94px;letter-spacing:0.69px;color:#555;">or</div>
 <div class="t" style="left:770.90px;top:153.31px;font-size:12.15px;letter-spacing:0.03px;font-weight:bold;color:#333;">Select from device</div>
 <div class="t" style="left:302.00px;top:215.00px;font-size:12.99px;letter-spacing:0.53px;font-weight:bold;color:#333;">Recent</div>
 <div class="t" style="left:318.70px;top:243.12px;font-size:12.57px;letter-spacing:0.14px;color:#666;">Name</div>
 <div class="t" style="left:364.40px;top:286.81px;font-size:12.15px;letter-spacing:0.53px;font-weight:bold;color:#333;">client non disclosure agreement</div>
 <div class="t" style="left:364.40px;top:347.31px;font-size:12.15px;letter-spacing:0.53px;font-weight:bold;color:#333;">Complainant_s or</div>
 <div class="t" style="left:364.40px;top:407.81px;font-size:12.15px;letter-spacing:0.53px;font-weight:bold;color:#333;">medical records confidentiality</div>
 <div class="t" style="left:364.40px;top:468.31px;font-size:12.15px;letter-spacing:0.53px;font-weight:bold;color:#333;">HIPAA one-pager</div>
 <div class="t" style="left:364.40px;top:528.81px;font-size:12.15px;letter-spacing:0.53px;font-weight:bold;color:#333;">form 1095 c</div>
 <div class="t" style="left:1049.70px;top:286.46px;font-size:12.57px;letter-spacing:-0.23px;font-weight:bold;color:#333;">Open</div>
 <div class="t" style="left:302.20px;top:590.91px;font-size:13.69px;letter-spacing:0.31px;font-weight:bold;color:#333;">pdfFiller library</div>
 <div class="t" style="left:1125.30px;top:591.82px;font-size:12.85px;letter-spacing:-0.22px;font-weight:bold;color:#1f7fd1;">View all</div>
 <div class="t" style="left:385.90px;top:662.16px;font-size:14.11px;letter-spacing:0.23px;font-weight:bold;color:#333;">w9 form 2018</div>
 <div class="t" style="left:385.10px;top:683.34px;font-size:12.30px;letter-spacing:0.26px;color:#555;">pdfFiller</div>
 <div class="t" style="left:682.90px;top:662.16px;font-size:14.11px;letter-spacing:0.00px;font-weight:bold;color:#333;">Lease agreement</div>
 <div class="t" style="left:683.10px;top:683.34px;font-size:12.30px;letter-spacing:0.26px;color:#555;">pdfFiller</div>
 <div class="t" style="left:980.80px;top:662.16px;font-size:14.11px;letter-spacing:0.18px;font-weight:bold;color:#333;">2023 Form W-2. Wage and ...</div>
 <div class="t" style="left:981.00px;top:683.34px;font-size:12.30px;letter-spacing:0.26px;color:#555;">pdfFiller</div>
 <div class="t" style="left:301.40px;top:761.48px;font-size:13.97px;letter-spacing:0.32px;font-weight:bold;color:#333;">Welcome documents</div>
 <div class="t" style="left:364.50px;top:807.60px;font-size:12.29px;letter-spacing:0.66px;font-weight:bold;color:#333;">Get started with pdfFiller</div>
 <div class="t" style="left:364.50px;top:826.40px;font-size:12.29px;letter-spacing:0.00px;color:#777;">pdfFiller guide</div>
 <div class="t" style="left:1244.60px;top:265.47px;font-size:14.80px;letter-spacing:0.02px;font-weight:bold;color:#333;">client non disclosure agr...</div>
 <div class="t" style="left:1265.30px;top:304.39px;font-size:14.66px;letter-spacing:-0.58px;font-weight:bold;color:#333;">Actions</div>
 <div class="t" style="left:1390.00px;top:304.07px;font-size:14.80px;letter-spacing:0.08px;color:#666;">Details</div>
 <div class="t" style="left:1286.20px;top:358.43px;font-size:12.37px;letter-spacing:0.05px;font-weight:bold;color:#333;">Open</div>
 <div class="t" style="left:1286.20px;top:399.43px;font-size:12.37px;letter-spacing:-0.50px;font-weight:bold;color:#333;">Save as</div>
 <div class="t" style="left:1286.20px;top:440.43px;font-size:12.37px;letter-spacing:-0.39px;font-weight:bold;color:#333;">Email</div>
 <div class="t" style="left:1286.20px;top:481.43px;font-size:12.37px;letter-spacing:-0.01px;font-weight:bold;color:#333;">Print</div>
 <div class="t" style="left:1286.20px;top:522.43px;font-size:12.37px;letter-spacing:0.14px;font-weight:bold;color:#333;">Convert to template</div>
 <div class="t" style="left:1286.20px;top:563.43px;font-size:12.37px;letter-spacing:-0.72px;font-weight:bold;color:#333;">E-sign</div>
 <div class="t" style="left:1286.20px;top:604.43px;font-size:12.37px;letter-spacing:-0.24px;font-weight:bold;color:#333;">Share</div>
 <div class="t" style="left:1286.20px;top:645.43px;font-size:12.37px;letter-spacing:-0.18px;font-weight:bold;color:#333;">LinkToFill</div>
 <div class="t" style="left:1286.20px;top:686.43px;font-size:12.37px;letter-spacing:-0.14px;font-weight:bold;color:#333;">Add to Public page</div>
 <div class="t" style="left:1286.20px;top:768.43px;font-size:12.37px;letter-spacing:-0.11px;font-weight:bold;color:#333;">Convert</div>
 <div class="t" style="left:1286.20px;top:809.43px;font-size:12.37px;letter-spacing:-1.01px;font-weight:bold;color:#333;">Fax</div>
 <div class="t" style="left:1421.50px;top:687.67px;font-size:10.20px;letter-spacing:-0.03px;font-weight:bold;color:#1f8a4c;">NEW</div>
 <div class="t" style="left:1249.00px;top:734.31px;font-size:11.45px;letter-spacing:-1.03px;color:#555;">EXPORT</div>
 <div id="ov" class="a"></div>
 <!-- MODAL -->
 <div class="a" style="left:480px;top:206px;width:512px;height:420px;background:#fff;border-radius:5px;overflow:hidden;box-shadow:0 2px 26px rgba(0,0,0,0.2)">
  <div class="a" style="left:0;top:0;width:512px;height:57px;background:#f8f8f8;border-bottom:1px solid #dedede"></div>
 </div>
 <svg class="a" style="left:955px;top:226px" width="17" height="16" viewBox="0 0 17 16"><path d="M2.5 2 L14.5 14 M14.5 2 L2.5 14" stroke="#8c8c8c" stroke-width="1.9"/></svg>
 <div class="a" style="left:512px;top:316px;width:447px;height:61px;border:1px solid #dcdcdc;border-radius:4px;background:#fff"></div>
 <svg class="a" style="left:531px;top:335px" width="23" height="24" viewBox="0 0 23 24"><path d="M4.5 20.5 H3.3 Q2.5 20.5 2.5 19.7 V3 Q2.5 2.2 3.3 2.2 H12.3 L17.3 7.2 V11.5" fill="none" stroke="#555" stroke-width="1.6"/><path d="M12 2.2 V7.5 H17.3" fill="none" stroke="#555" stroke-width="1.2"/><rect x="8" y="14.5" width="12.5" height="7" rx="1.2" fill="#e3f4e9" stroke="#5fbf86" stroke-width="1.2"/><path d="M12.7 16.3 H15.3 M12.7 19.7 H15.3 M14 16.3 V19.7" stroke="#3aa56a" stroke-width="1"/></svg>
 <svg class="a" style="left:923px;top:342px" width="12" height="10" viewBox="0 0 12 10"><path d="M2.3 3 L6 6.7 L9.7 3" fill="none" stroke="#333" stroke-width="1.9"/></svg>
 <svg class="a" style="left:921px;top:392px" width="17" height="19" viewBox="0 0 17 19"><path d="M8.5 1.5 V17 M2 10.8 L8.5 17.3 L15 10.8" fill="none" stroke="#d2d2d2" stroke-width="1.5"/></svg>
 <div class="a" style="left:510px;top:425px;width:451px;height:65px;border:2px solid #d9d9d9;border-radius:6px"></div>
 <div class="a" style="left:513px;top:428px;width:445px;height:59px;border:1px solid #e2e2e2;border-radius:4px;background:linear-gradient(#fff 70%,#f7f7f7)"></div>
 <svg class="a monitor" style="left:530px;top:446px" width="23" height="23" viewBox="0 0 23 23"><rect x="1.9" y="1.9" width="19.2" height="14" rx="1.3" fill="#dbeaf8" stroke="#333" stroke-width="1.9"/><rect x="2.6" y="12.3" width="17.8" height="2.9" fill="#9a9a9a"/><path d="M9 16 V19.3 M14 16 V19.3" stroke="#333" stroke-width="1.6"/><path d="M6.5 20.2 H16.5" stroke="#333" stroke-width="1.9" stroke-linecap="round"/></svg>
 <svg class="a" style="left:923px;top:451px" width="12" height="10" viewBox="0 0 12 10"><path d="M2.3 7 L6 3.3 L9.7 7" fill="none" stroke="#333" stroke-width="1.9"/></svg>
 <!-- dropdown -->
 <div class="a" style="left:512px;top:494px;width:447px;height:306px;background:#fff;border-radius:5px;box-shadow:0 2px 14px rgba(0,0,0,0.22)"></div>
 <div class="a" style="left:512px;top:553px;width:447px;height:1px;background:#ececec"></div>
 <div class="a" style="left:512px;top:615px;width:447px;height:1px;background:#ececec"></div>
 <div class="a" style="left:512px;top:677px;width:447px;height:1px;background:#ececec"></div>
 <div class="a" style="left:512px;top:738px;width:447px;height:1px;background:#ececec"></div>
 <svg class="a" style="left:530px;top:512px" width="23" height="23" viewBox="0 0 23 23"><rect x="1.9" y="1.9" width="19.2" height="14" rx="1.3" fill="#dbeaf8" stroke="#333" stroke-width="1.9"/><rect x="2.6" y="12.3" width="17.8" height="2.9" fill="#9a9a9a"/><path d="M9 16 V19.3 M14 16 V19.3" stroke="#333" stroke-width="1.6"/><path d="M6.5 20.2 H16.5" stroke="#333" stroke-width="1.9" stroke-linecap="round"/></svg>
 <svg class="a" style="left:921px;top:516px" width="20" height="16" viewBox="0 0 20 16"><path d="M2.7 8.6 L7.9 13 L17.2 2.6" fill="none" stroke="#ff8c00" stroke-width="2.1" stroke-linecap="round" stroke-linejoin="round"/></svg>
 <svg class="a" style="left:531px;top:575px" width="21" height="20" viewBox="0 0 21 20"><path d="M5.3 0.6 L0.5 3.7 L5.3 6.8 L10.5 3.7 Z M15.7 0.6 L10.5 3.7 L15.7 6.8 L20.5 3.7 Z M0.5 9.9 L5.3 13 L10.5 9.9 L5.3 6.8 Z M20.5 9.9 L15.7 6.8 L10.5 9.9 L15.7 13 Z M5.3 14.2 L10.5 17.5 L15.7 14.2 L10.5 11 Z" fill="#0d63f8"/></svg>
 <svg class="a" style="left:529px;top:636px" width="25" height="22" viewBox="0 0 87.3 78"><path d="M6.6 66.85l3.85 6.65c.8 1.4 1.95 2.5 3.3 3.3l13.75-23.8h-27.5c0 1.55.4 3.1 1.2 4.5z" fill="#0066da"/><path d="M43.65 25L29.9 1.2c-1.35.8-2.5 1.9-3.3 3.3l-25.4 44A9.06 9.06 0 0 0 0 53h27.5z" fill="#00ac47"/><path d="M73.55 76.8c1.35-.8 2.5-1.9 3.3-3.3l1.6-2.75 7.65-13.25c.8-1.4 1.2-2.95 1.2-4.5H59.798l5.852 11.5z" fill="#ea4335"/><path d="M43.65 25L57.4 1.2c-1.35-.8-2.9-1.2-4.5-1.2H34.4c-1.6 0-3.15.45-4.5 1.2z" fill="#00832d"/><path d="M59.8 53H27.5L13.75 76.8c1.35.8 2.9 1.2 4.5 1.2h50.8c1.6 0 3.15-.45 4.5-1.2z" fill="#2684fc"/><path d="M73.4 26.5l-12.7-22c-.8-1.4-1.95-2.5-3.3-3.3L43.65 25 59.8 53h27.45c0-1.55-.4-3.1-1.2-4.5z" fill="#ffba00"/></svg>
 <div class="a" style="left:660px;top:653px;width:4px;height:4px;border-radius:2px;background:#bbb"></div>
 <div class="a" style="left:670px;top:664px;width:45px;height:0;border-top:1px dashed #1a8df0"></div>
 <svg class="a" style="left:528px;top:700px" width="27" height="16" viewBox="0 0 27 16"><g fill="none" stroke="#0b61d8" stroke-width="2"><path d="M2 1.2 V14.6"/><circle cx="6.3" cy="10.4" r="3.9"/><circle cx="14.9" cy="10.4" r="3.9"/><path d="M19.4 6.2 L25.2 14.6 M25.2 6.2 L19.4 14.6"/></g></svg>
 <svg class="a" style="left:528px;top:760px" width="26" height="19" viewBox="0 0 26 19"><path d="M9.8 6.5 C10.8 3 13.3 1 16.3 1 C19.2 1 21.4 2.8 22.3 5.8 L14.5 12.8 Z" fill="#0364b8"/><path d="M9.8 6.5 C7.7 5.8 5.6 6 4.2 7 C1.7 8.7 0.8 11.8 2 14.2 L14.5 12.8 L22.3 5.8 C19 5.4 16.2 6.8 14.4 9.2 C13 7.3 11.6 6.6 9.8 6.5Z" fill="#0078d4"/><path d="M2 14.2 C2.8 16 4.5 17.8 7 17.8 H21.6 C23.8 17.8 25.3 16 25.3 13.7 C25.3 11 23.5 9 21 8.8 C19.7 8.6 18.5 8.8 17.2 9.6 C16.2 9.3 15.2 9.3 14.4 9.2 Z" fill="#1490df"/><path d="M7 17.8 H21.6 C23.8 17.8 25.3 16 25.3 13.7 L14.5 12.8 L2 14.2 C2.8 16 4.5 17.8 7 17.8Z" fill="#28a8ea"/></svg>

 <div class="t" style="left:504.50px;top:223.83px;font-size:21.23px;letter-spacing:0.46px;color:#404040;">Save client non disclosure agreement</div>
 <div class="t" style="left:512.70px;top:291.54px;font-size:14.25px;letter-spacing:-0.39px;color:#333;">Save as</div>
 <div class="t" style="left:566.60px;top:331.33px;font-size:12.01px;letter-spacing:0.11px;font-weight:bold;color:#333;">Fillable PDF document</div>
 <div class="t" style="left:566.60px;top:350.21px;font-size:11.80px;letter-spacing:0.00px;color:#888;">PDF</div>
 <div class="t" style="left:512.70px;top:401.74px;font-size:14.25px;letter-spacing:-0.09px;color:#333;">Save to</div>
 <div class="t" style="left:566.50px;top:441.73px;font-size:12.01px;letter-spacing:0.13px;font-weight:bold;color:#333;">Desktop</div>
 <div class="t" style="left:566.50px;top:460.95px;font-size:11.87px;letter-spacing:0.57px;color:#888;">Downloads folder</div>
 <div class="t" style="left:566.50px;top:508.63px;font-size:12.01px;letter-spacing:0.13px;font-weight:bold;color:#333;">Desktop</div>
 <div class="t" style="left:566.50px;top:527.85px;font-size:11.87px;letter-spacing:0.57px;color:#888;">Downloads folder</div>
 <div class="t" style="left:566.50px;top:570.08px;font-size:12.01px;letter-spacing:0.16px;font-weight:bold;color:#333;">Dropbox</div>
 <div class="t" style="left:566.50px;top:589.30px;font-size:11.87px;letter-spacing:0.60px;color:#888;">Your folder</div>
 <div class="t" style="left:566.50px;top:631.53px;font-size:12.01px;letter-spacing:-0.00px;font-weight:bold;color:#333;">Google Drive</div>
 <div class="t" style="left:566.50px;top:650.75px;font-size:11.87px;letter-spacing:0.56px;color:#888;">pdfFiller folder</div>
 <div class="t" style="left:566.50px;top:692.98px;font-size:12.01px;letter-spacing:-0.75px;font-weight:bold;color:#333;">Box</div>
 <div class="t" style="left:566.50px;top:712.20px;font-size:11.87px;letter-spacing:0.56px;color:#888;">pdfFiller folder</div>
 <div class="t" style="left:566.50px;top:754.43px;font-size:12.01px;letter-spacing:0.19px;font-weight:bold;color:#333;">OneDrive</div>
 <div class="t" style="left:566.50px;top:773.65px;font-size:11.87px;letter-spacing:0.56px;color:#888;">pdfFiller folder</div>
 <div class="t" style="left:670.60px;top:650.75px;font-size:11.87px;letter-spacing:0.59px;color:#1a8df0;">Log out</div>
</div>
</body></html>
